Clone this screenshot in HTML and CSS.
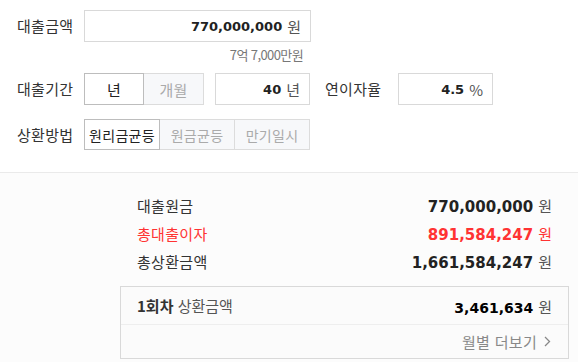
FILE: index.html
```html
<!DOCTYPE html>
<html lang="ko">
<head>
  <meta charset="UTF-8" />
  <meta name="viewport" content="width=device-width, initial-scale=1" />
  <title>대출 계산기</title>
  <link rel="stylesheet" href="styles.css">
</head>
<body>
  <div class="calc-form">
    <div class="form-row">
      <span class="label">대출금액</span>
      <div class="field field-wide"><b class="num">770,000,000</b><span class="unit">원</span></div>
    </div>
    <div class="hint">7억 7,000만원</div>

    <div class="form-row row-period">
      <span class="label">대출기간</span>
      <div class="seg seg-period">
        <span class="seg-item active">년</span>
        <span class="seg-item">개월</span>
      </div>
      <div class="field field-small field-term"><b class="num">40</b><span class="unit">년</span></div>
      <span class="label label-rate">연이자율</span>
      <div class="field field-small"><b class="num">4.5</b><span class="unit">%</span></div>
    </div>

    <div class="form-row row-method">
      <span class="label">상환방법</span>
      <div class="seg seg-method">
        <span class="seg-item active">원리금균등</span>
        <span class="seg-item">원금균등</span>
        <span class="seg-item">만기일시</span>
      </div>
    </div>
  </div>

  <div class="result">
    <div class="result-row">
      <span class="result-label">대출원금</span>
      <span class="result-value"><b class="num">770,000,000</b><span class="unit">원</span></span>
    </div>
    <div class="result-row interest">
      <span class="result-label">총대출이자</span>
      <span class="result-value"><b class="num">891,584,247</b><span class="unit">원</span></span>
    </div>
    <div class="result-row">
      <span class="result-label">총상환금액</span>
      <span class="result-value"><b class="num">1,661,584,247</b><span class="unit">원</span></span>
    </div>

    <div class="payment-box">
      <div class="payment-row">
        <span class="payment-label"><b>1회차</b> 상환금액</span>
        <span class="payment-value"><b class="num">3,461,634</b><span class="unit">원</span></span>
      </div>
      <div class="more-row">
        <span class="more">월별 더보기</span>
        <svg class="chevron" width="7" height="11" viewBox="0 0 7 11"><path d="M1 1l4.5 4.5L1 10" fill="none" stroke="#888" stroke-width="1.3"/></svg>
      </div>
    </div>
  </div>
</body>
</html>
```

FILE: styles.css
```css
body {
  margin: 0;
  font-family: "Noto Sans CJK KR", "Noto Sans", sans-serif;
  color: #333;
  background: #fff;
  width: 578px;
  height: 362px;
  overflow: hidden;
}

.num {
  font-family: "DejaVu Sans", Verdana, sans-serif;
  font-weight: bold;
  color: #222;
}

.unit {
  color: #555;
  font-size: 15px;
  margin-left: 5px;
}

/* top form */
.calc-form {
  padding: 10px 0 0 17px;
  height: 162px;
  border-bottom: 1px solid #eaeaea;
}

.form-row {
  display: flex;
  align-items: center;
  height: 32px;
}

.label {
  width: 67px;
  font-size: 15px;
  letter-spacing: 0.3px;
  line-height: 20px;
  color: #333;
}

.field {
  box-sizing: border-box;
  height: 32px;
  border: 1px solid #d9d9d9;
  display: flex;
  align-items: center;
  justify-content: flex-end;
  padding-right: 9px;
  font-size: 13px;
}

.field-wide {
  width: 227px;
}

.field-small {
  width: 95px;
}

.field-term {
  margin-left: 11px;
}

.hint {
  width: 286px;
  text-align: right;
  font-size: 13px;
  letter-spacing: -0.6px;
  color: #777;
  line-height: 16px;
  margin-top: 5px;
}

.row-period {
  margin-top: 10px;
}

.label-rate {
  margin-left: 15px;
  width: 73px;
}

.row-method {
  margin-top: 14px;
  height: 31px;
}

.seg {
  display: flex;
  height: 100%;
}

.seg-item {
  box-sizing: border-box;
  display: flex;
  align-items: center;
  justify-content: center;
  font-size: 14px;
  letter-spacing: 0.3px;
  color: #aaa;
  background: #f7f8fa;
  border: 1px solid #dcdcdc;
  border-left: none;
}

.seg-item.active {
  color: #222;
  background: #fff;
  border: 1px solid #bdbdbd;
}

.seg-period .seg-item {
  width: 60px;
  font-size: 15px;
}

.seg-method .seg-item {
  width: 75px;
}

.seg-method .seg-item.active {
  width: 76px;
}

/* results */
.result {
  background: #fcfcfc;
  height: 189px;
  padding: 18px 9px 0 120px;
}

.result-row {
  display: flex;
  justify-content: space-between;
  align-items: center;
  height: 28px;
  padding: 0 17px 0 17px;
}

.result-label {
  font-size: 15px;
  letter-spacing: 0.3px;
  color: #333;
}

.result-value .num {
  font-size: 15px;
}

.interest .result-label,
.interest .num,
.interest .unit {
  color: #f33;
}

.payment-box {
  margin-top: 11px;
  border: 1px solid #d9d9d9;
  background: #fbfbfb;
}

.payment-row {
  display: flex;
  justify-content: space-between;
  align-items: center;
  height: 37px;
  padding: 0 16px;
  border-bottom: 1px solid #eeeeee;
}

.payment-label {
  font-size: 15px;
  color: #555;
}

.payment-label b {
  color: #333;
}

.payment-value .num {
  font-size: 14px;
  color: #000;
}

.more-row {
  display: flex;
  justify-content: flex-end;
  align-items: center;
  height: 33px;
  padding-right: 17px;
}

.more {
  font-size: 15px;
  letter-spacing: 0.3px;
  color: #888;
}

.chevron {
  margin-left: 7px;
}
```
